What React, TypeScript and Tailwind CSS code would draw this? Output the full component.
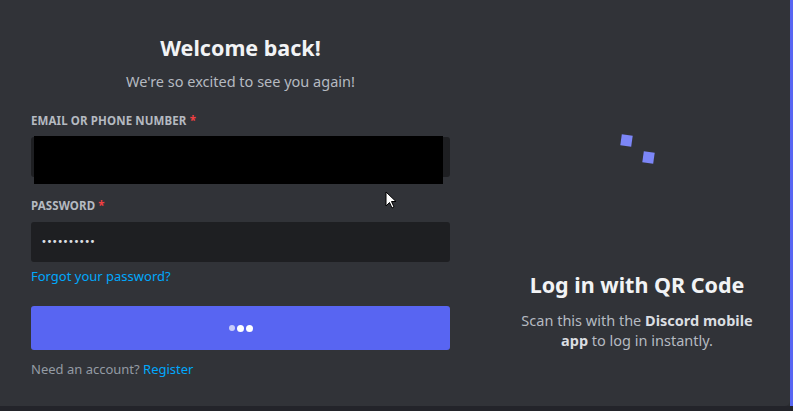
export default function App() {
  return (
    <div className="w-[793px] h-[411px] bg-[#2b2d31] relative overflow-hidden" style={{ fontFamily: '"Noto Sans", "Open Sans", sans-serif' }}>
      <div className="absolute right-0 top-0 w-[3px] h-[411px] bg-[#5865f2]" />
      <div className="absolute left-0 bottom-0 w-[793px] h-[5px] bg-[#23242a]" />
      <div className="w-[790px] h-[406px] bg-[#313338] rounded-br-[5px] flex pl-[31px]">
        <div className="w-[419px] shrink-0 flex flex-col">
          <h1 className="mt-[34px] text-center text-[21.5px] leading-[28px] font-bold text-[#f2f3f5]">Welcome back!</h1>
          <p className="mt-[9px] text-center text-[14.5px] leading-[20px] text-[#b5bac1]">We're so excited to see you again!</p>
          <div className="mt-[22px] text-[11.5px] leading-[16px] font-bold text-[#b5bac1] tracking-[0.01em]">
            EMAIL OR PHONE NUMBER <span className="text-[#f23f42]">*</span>
          </div>
          <div className="mt-[8px] h-[40px] rounded-[3px] bg-[#1e1f22] relative">
            <div className="absolute left-[3px] top-[-1px] w-[409px] h-[48px] bg-black" />
          </div>
          <div className="mt-[21px] text-[11.5px] leading-[16px] font-bold text-[#b5bac1] tracking-[0.01em]">
            PASSWORD <span className="text-[#f23f42]">*</span>
          </div>
          <div className="mt-[8px] h-[40px] rounded-[3px] bg-[#1e1f22] flex items-center px-[10px]">
            <span className="text-[#dbdee1] text-[10px] tracking-[-0.5px] leading-none" style={{ fontFamily: '"DejaVu Sans", sans-serif' }}>••••••••••</span>
          </div>
          <div className="mt-[4px] text-[13px] leading-[20px] text-[#00a8fc]">Forgot your password?</div>
          <div className="mt-[20px] h-[44px] rounded-[3px] bg-[#5865f2] flex items-center justify-center gap-[2px]">
            <span className="w-[6px] h-[6px] rounded-full bg-[#c8ccfa]" />
            <span className="w-[7px] h-[7px] rounded-full bg-white" />
            <span className="w-[7px] h-[7px] rounded-full bg-white" />
          </div>
          <div className="mt-[9px] text-[13px] leading-[20px] text-[#949ba4]">
            Need an account? <span className="text-[#00a8fc]">Register</span>
          </div>
        </div>
        <div className="ml-[67px] w-[240px] shrink-0 flex flex-col items-center">
          <div className="h-[271px] w-full relative">
            <div className="absolute left-[104px] top-[135px] w-[11px] h-[11px] bg-[#7c86f7] rotate-[8deg]" />
            <div className="absolute left-[126px] top-[152px] w-[11px] h-[11px] bg-[#7c86f7] rotate-[8deg]" />
          </div>
          <h2 className="text-[21.5px] leading-[28px] font-bold text-[#f2f3f5] text-center whitespace-nowrap">Log in with QR Code</h2>
          <div className="mt-[11px] text-[14.5px] leading-[20px] text-[#b5bac1] text-center flex flex-col items-center">
            <span className="whitespace-nowrap">Scan this with the <b className="font-bold text-[#dbdee1]">Discord mobile</b></span>
            <span className="whitespace-nowrap"><b className="font-bold text-[#dbdee1]">app</b> to log in instantly.</span>
          </div>
        </div>
      </div>
      <svg className="absolute left-[385px] top-[191px]" width="12" height="18" viewBox="0 0 12 18">
        <path d="M1 1 L1 15 L4.5 11.5 L7 17 L9 16 L6.5 10.5 L11 10.5 Z" fill="white" stroke="black" strokeWidth="1" />
      </svg>
    </div>
  );
}
